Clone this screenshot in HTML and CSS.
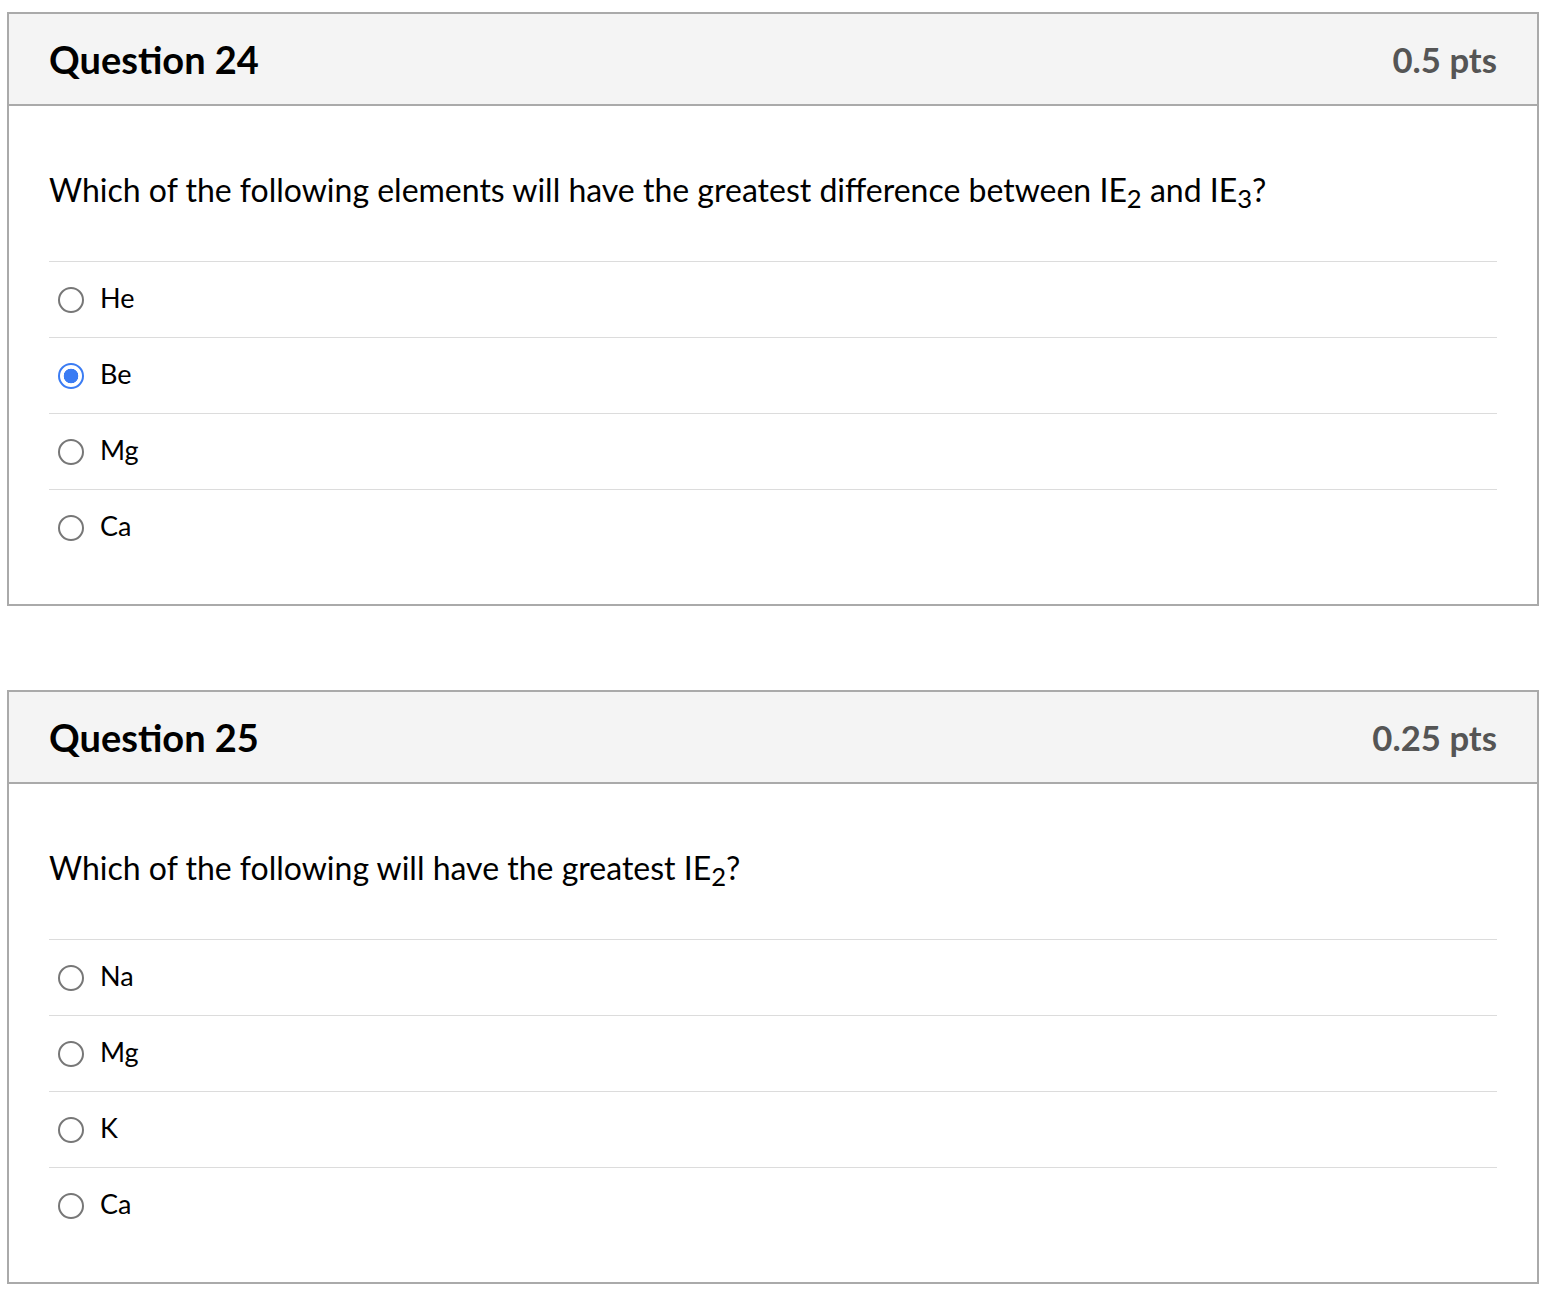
FILE: index.html
```html
<!DOCTYPE html>
<html>
<head>
<meta charset="utf-8">
<link rel="stylesheet" href="styles.css">
</head>
<body>
<div class="page">
  <section class="question">
    <header class="q-header">
      <h2 class="q-title">Question 24</h2>
      <span class="q-points">0.5 pts</span>
    </header>
    <div class="q-body">
      <p class="q-text">Which of the following elements will have the greatest difference between IE<sub>2</sub> and IE<sub>3</sub>?</p>
      <ul class="answers">
        <li class="answer"><span class="radio"></span><span class="label">He</span></li>
        <li class="answer"><span class="radio checked"></span><span class="label">Be</span></li>
        <li class="answer"><span class="radio"></span><span class="label">Mg</span></li>
        <li class="answer"><span class="radio"></span><span class="label">Ca</span></li>
      </ul>
    </div>
  </section>
  <section class="question">
    <header class="q-header">
      <h2 class="q-title">Question 25</h2>
      <span class="q-points">0.25 pts</span>
    </header>
    <div class="q-body">
      <p class="q-text">Which of the following will have the greatest IE<sub>2</sub>?</p>
      <ul class="answers">
        <li class="answer"><span class="radio"></span><span class="label">Na</span></li>
        <li class="answer"><span class="radio"></span><span class="label">Mg</span></li>
        <li class="answer"><span class="radio"></span><span class="label">K</span></li>
        <li class="answer"><span class="radio"></span><span class="label">Ca</span></li>
      </ul>
    </div>
  </section>
</div>
</body>
</html>
```
FILE: styles.css
```css
html, body {
  margin: 0;
  padding: 0;
  background: #fff;
}
body {
  font-family: Lato, "Open Sans", "Liberation Sans", sans-serif;
  color: #000;
}
.page {
  padding: 12px 17px 0 7px;
  display: flex;
  flex-direction: column;
  gap: 84px;
}
.question {
  border: 2px solid #aaa;
}
.q-header {
  background: #f4f4f4;
  border-bottom: 2px solid #aaa;
  height: 90px;
  padding: 0 40px 0 40px;
  display: flex;
  align-items: center;
  justify-content: space-between;
}
.q-title {
  margin: 0;
  font-size: 38px;
  font-weight: 700;
  color: #000;
}
.q-points {
  font-size: 34.7px;
  font-weight: 700;
  color: #555;
}
.q-body {
  padding: 61px 40px 39px 40px;
}
.q-text {
  margin: 0 0 48px 0;
  font-size: 32px;
  line-height: 46px;
}
.q-text sub {
  font-size: 0.8em;
  line-height: 0;
  vertical-align: -0.25em;
}
.answers {
  list-style: none;
  margin: 0;
  padding: 0;
}
.answer {
  border-top: 1px solid #dcdcdc;
  height: 75px;
  display: flex;
  align-items: center;
  padding-left: 9px;
  gap: 16px;
}
.radio {
  width: 26px;
  height: 26px;
  box-sizing: border-box;
  border: 2px solid #777;
  border-radius: 50%;
  flex: none;
  background: #fff;
}
.radio.checked {
  border-color: #3b7cf3;
  background: radial-gradient(circle, #3b7cf3 0 7px, #fff 7.6px);
}
.label {
  font-size: 27px;
  margin-top: -4px;
}
```
